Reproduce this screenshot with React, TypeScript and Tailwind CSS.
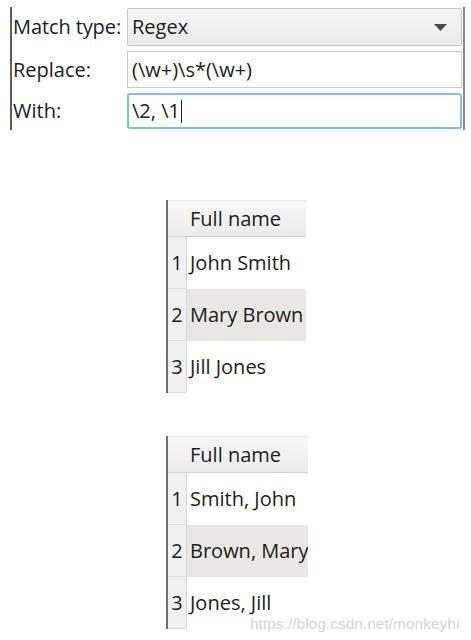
import React from "react";

const rows1 = ["John Smith", "Mary Brown", "Jill Jones"];
const rows2 = ["Smith, John", "Brown, Mary", "Jones, Jill"];

function NameTable({ names, extraClass }: { names: string[]; extraClass: string }) {
  return (
    <div className={"ml-[166px] border-l-2 border-[#6f6f6f] " + extraClass}>
      <div className="h-[37px] flex items-center pl-[22px] bg-gradient-to-b from-[#f7f7f7] to-[#ececec] border-b border-[#d4d4d4] border-t border-t-[#e4e4e4] text-[20px] text-[#1c1c1c]">
        Full name
      </div>
      {names.map((n, i) => (
        <div key={n} className="flex h-[52px]">
          <div className="w-[19px] bg-[#f1f1f1] border-r border-[#d6d6d6] border-b border-b-[#dedede] flex items-center justify-center text-[20px] text-[#1c1c1c]">
            {i + 1}
          </div>
          <div
            className={
              "flex-1 flex items-center pl-[3px] text-[20px] text-[#1c1c1c] whitespace-nowrap overflow-hidden " +
              (i === 1 ? "bg-[#e9e8e5]" : "bg-white")
            }
          >
            {n}
          </div>
        </div>
      ))}
    </div>
  );
}

export default function App() {
  return (
    <div className="w-[471px] h-[640px] bg-white relative overflow-hidden font-['Open_Sans',sans-serif]">
      <div className="ml-[10px] mt-[7px] w-[455px] border-l-2 border-r-2 border-l-[#5e5e5e] border-r-[#8a8a8a] flex flex-col gap-[5px] pt-[1px] pb-[1px]">
        <div className="flex items-center h-[38px]">
          <div className="w-[115px] pl-[1px] text-[20px] text-[#1c1c1c] whitespace-nowrap tracking-[-0.1px]">Match type:</div>
          <div className="w-[335px] h-[38px] border border-[#c6c6c6] rounded-[2px] bg-gradient-to-b from-[#f6f6f6] to-[#ebebeb] flex items-center justify-between pl-[4px] pr-[14px]">
            <span className="text-[20px] text-[#1c1c1c]">Regex</span>
            <svg width="13" height="7" viewBox="0 0 13 7">
              <polygon points="0,0 13,0 6.5,7" fill="#4a4a4a" />
            </svg>
          </div>
        </div>
        <div className="flex items-center h-[37px]">
          <div className="w-[115px] pl-[1px] text-[20px] text-[#1c1c1c]">Replace:</div>
          <div className="w-[335px] h-[37px] border border-[#c9c9c9] bg-white flex items-center pl-[4px] text-[20px] text-[#1c1c1c]">
            (\w+)\s*(\w+)
          </div>
        </div>
        <div className="flex items-center h-[36px]">
          <div className="w-[115px] pl-[1px] text-[20px] text-[#1c1c1c]">With:</div>
          <div className="w-[335px] h-[36px] border-2 border-[#86bbec] rounded-[3px] bg-white flex items-center pl-[3px] text-[20px] text-[#1c1c1c]">
            <span>\2, \1</span>
            <span className="w-[1px] h-[23px] bg-[#222] ml-[1px]" />
          </div>
        </div>
      </div>

      <NameTable names={rows1} extraClass="mt-[70px] w-[140px]" />
      <NameTable names={rows2} extraClass="mt-[43px] w-[142px]" />

      <div className="absolute left-[250px] top-[612px] text-[15.5px] text-[#d4d4d4] font-['Liberation_Sans',sans-serif] whitespace-nowrap">
        https://blog.csdn.net/monkeyhi
      </div>
    </div>
  );
}
